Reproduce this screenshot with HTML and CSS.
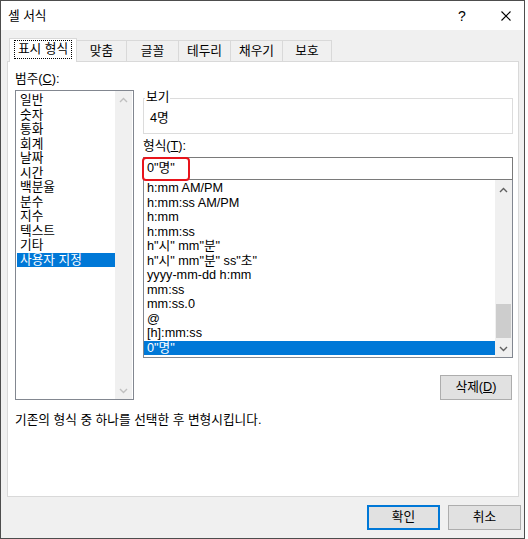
FILE: index.html
```html
<!DOCTYPE html>
<html lang="ko">
<head>
<meta charset="utf-8">
<title>셀 서식</title>
<link rel="stylesheet" href="styles.css">
</head>
<body>
<div class="window">
  <div class="titlebar">
    <span class="title">셀 서식</span>
    <span class="help">?</span>
    <span class="close"><svg width="10" height="10" viewBox="0 0 10 10"><path d="M0.5 0.5L9.5 9.5M9.5 0.5L0.5 9.5" stroke="#000" stroke-width="1.1" fill="none"/></svg></span>
  </div>
  <div class="body">
    <div class="tabs">
      <div class="tab active"><span class="focus">표시 형식</span></div>
      <div class="tab w51">맞춤</div>
      <div class="tab w53">글꼴</div>
      <div class="tab w53">테두리</div>
      <div class="tab w53">채우기</div>
      <div class="tab w50">보호</div>
    </div>
    <div class="panel">
      <div class="cols">
        <div class="left">
          <div class="label">범주(<u>C</u>):</div>
          <div class="catlist">
            <div class="items">
              <div class="row">일반</div>
              <div class="row">숫자</div>
              <div class="row">통화</div>
              <div class="row">회계</div>
              <div class="row">날짜</div>
              <div class="row">시간</div>
              <div class="row">백분율</div>
              <div class="row">분수</div>
              <div class="row">지수</div>
              <div class="row">텍스트</div>
              <div class="row">기타</div>
              <div class="row sel">사용자 지정</div>
            </div>
            <div class="vscroll off">
              <div class="sbtn"><svg width="9" height="6" viewBox="0 0 9 6"><path d="M1 5L4.5 1.5L8 5" stroke="currentColor" stroke-width="1.4" fill="none"/></svg></div>
              <div class="track"></div>
              <div class="sbtn"><svg width="9" height="6" viewBox="0 0 9 6"><path d="M1 1L4.5 4.5L8 1" stroke="currentColor" stroke-width="1.4" fill="none"/></svg></div>
            </div>
          </div>
        </div>
        <div class="right">
          <fieldset class="preview">
            <legend>보기</legend>
            <div class="sample">4명</div>
          </fieldset>
          <div class="label gap5">형식(<u>T</u>):</div>
          <div class="inputwrap">
            <div class="input">0"명"</div>
            <div class="annot"></div>
          </div>
          <div class="fmtlist">
            <div class="items">
              <div class="row">h:mm AM/PM</div>
              <div class="row">h:mm:ss AM/PM</div>
              <div class="row">h:mm</div>
              <div class="row">h:mm:ss</div>
              <div class="row">h"시" mm"분"</div>
              <div class="row">h"시" mm"분" ss"초"</div>
              <div class="row">yyyy-mm-dd h:mm</div>
              <div class="row">mm:ss</div>
              <div class="row">mm:ss.0</div>
              <div class="row">@</div>
              <div class="row">[h]:mm:ss</div>
              <div class="row sel">0"명"</div>
            </div>
            <div class="vscroll">
              <div class="sbtn"><svg width="9" height="6" viewBox="0 0 9 6"><path d="M1 5L4.5 1.5L8 5" stroke="currentColor" stroke-width="1.4" fill="none"/></svg></div>
              <div class="track"><div class="thumb"></div></div>
              <div class="sbtn"><svg width="9" height="6" viewBox="0 0 9 6"><path d="M1 1L4.5 4.5L8 1" stroke="currentColor" stroke-width="1.4" fill="none"/></svg></div>
            </div>
          </div>
          <div class="delrow"><button class="btn">삭제(<u>D</u>)</button></div>
        </div>
      </div>
      <div class="hint">기존의 형식 중 하나를 선택한 후 변형시킵니다.</div>
    </div>
    <div class="footer">
      <button class="btn default">확인</button>
      <button class="btn">취소</button>
    </div>
  </div>
</div>
</body>
</html>
```

FILE: styles.css
```css
* { box-sizing: border-box; }
html, body { margin: 0; padding: 0; }
body {
  width: 528px;
  height: 539px;
  overflow: hidden;
  background: #ffffff;
  font-family: "Liberation Sans", "Noto Sans CJK KR", sans-serif;
  font-size: 12.7px;
  color: #000;
}
.window {
  width: 525px;
  height: 539px;
  border: 1px solid #4d4d4d;
  background: #f0f0f0;
  display: flex;
  flex-direction: column;
}
.titlebar {
  height: 29px;
  flex: none;
  background: #fff;
  display: flex;
  align-items: center;
  padding-left: 7px;
}
.title { flex: 1; line-height: 16px; }
.help {
  width: 14px;
  text-align: center;
  font-size: 14px;
  line-height: 16px;
  margin-right: 32px;
}
.close { width: 10px; height: 10px; display: flex; margin-right: 13px; }
.body { padding: 8px 0 0 6px; flex: 1; }

.tabs {
  display: flex;
  align-items: flex-end;
  height: 23px;
  padding-left: 2px;
}
.tab {
  height: 21px;
  border: 1px solid #d9d9d9;
  border-bottom: none;
  margin-left: -1px;
  display: flex;
  align-items: center;
  justify-content: center;
  background: #f0f0f0;
  line-height: 15px;
}
.tab.active {
  width: 68px;
  height: 24px;
  margin-left: 0;
  margin-bottom: -1px;
  background: #fff;
  position: relative;
  z-index: 1;
  padding-bottom: 2px;
}
.w50 { width: 50px; }
.w51 { width: 51px; }
.w53 { width: 53px; }
.focus {
  display: inline-block;
  border: 1px dotted #000;
  padding: 1px 3px;
  line-height: 15px;
}

.panel {
  width: 512px;
  height: 436px;
  border: 1px solid #d9d9d9;
  background: #fff;
  padding: 10px 0 0 7px;
}
.cols { display: flex; gap: 9px; }
.left { width: 119px; }
.right { width: 370px; padding-top: 18px; }
.label { line-height: 15px; }
.gap5 { margin-top: 5px; }
u { text-decoration: underline; text-underline-offset: 1px; }

.catlist {
  margin-top: 3px;
  height: 310px;
  border: 1px solid #828790;
  display: flex;
}
.catlist .items { width: 99px; padding: 2px 0 0 1px; }
.row {
  height: 14.5px;
  line-height: 14.5px;
  padding-left: 3px;
  white-space: nowrap;
}
.row.sel { background: #0078d7; color: #fff; }

.vscroll {
  width: 17px;
  background: #f0f0f0;
  display: flex;
  flex-direction: column;
  color: #606060;
}
.vscroll.off { color: #c0c0c0; }
.sbtn {
  height: 17px;
  display: flex;
  align-items: center;
  justify-content: center;
  flex: none;
}
.track { flex: 1; display: flex; flex-direction: column; }
.thumb {
  margin: auto 1px 2px 1px;
  height: 34px;
  background: #cdcdcd;
}

.preview {
  margin: 0;
  padding: 0;
  min-width: 0;
  border: 1px solid #dcdcdc;
}
.preview legend {
  padding: 0 1px 2px 1px;
  margin-left: 1px;
  line-height: 14px;
}
.sample { padding: 4px 0 7px 6px; line-height: 16px; }

.inputwrap { position: relative; margin-top: 3px; }
.input {
  height: 23px;
  border: 1px solid #7a7a7a;
  padding-left: 3px;
  line-height: 21px;
}
.annot {
  position: absolute;
  left: -1px;
  top: 0;
  width: 48px;
  height: 24px;
  border: 2px solid #e8141b;
  border-radius: 4px;
}

.fmtlist {
  height: 178px;
  border: 1px solid #828790;
  border-top: none;
  display: flex;
}
.fmtlist .items { width: 351px; padding-top: 1px; }
.fmtlist .vscroll { padding-top: 1px; }

.delrow { display: flex; justify-content: flex-end; margin-top: 17px; padding-right: 1px; }
.btn {
  width: 72px;
  height: 25px;
  border: 1px solid #adadad;
  background: #e1e1e1;
  font-family: inherit;
  font-size: 12.7px;
  color: #000;
  padding: 0;
  line-height: 15px;
  margin: 0;
}
.hint { margin-top: 13px; line-height: 15px; }

.footer {
  display: flex;
  justify-content: flex-end;
  gap: 8px;
  margin-top: 8px;
  padding-right: 3px;
}
.footer .btn { width: 73px; }
.btn.default { border: 2px solid #0078d7; }
```
